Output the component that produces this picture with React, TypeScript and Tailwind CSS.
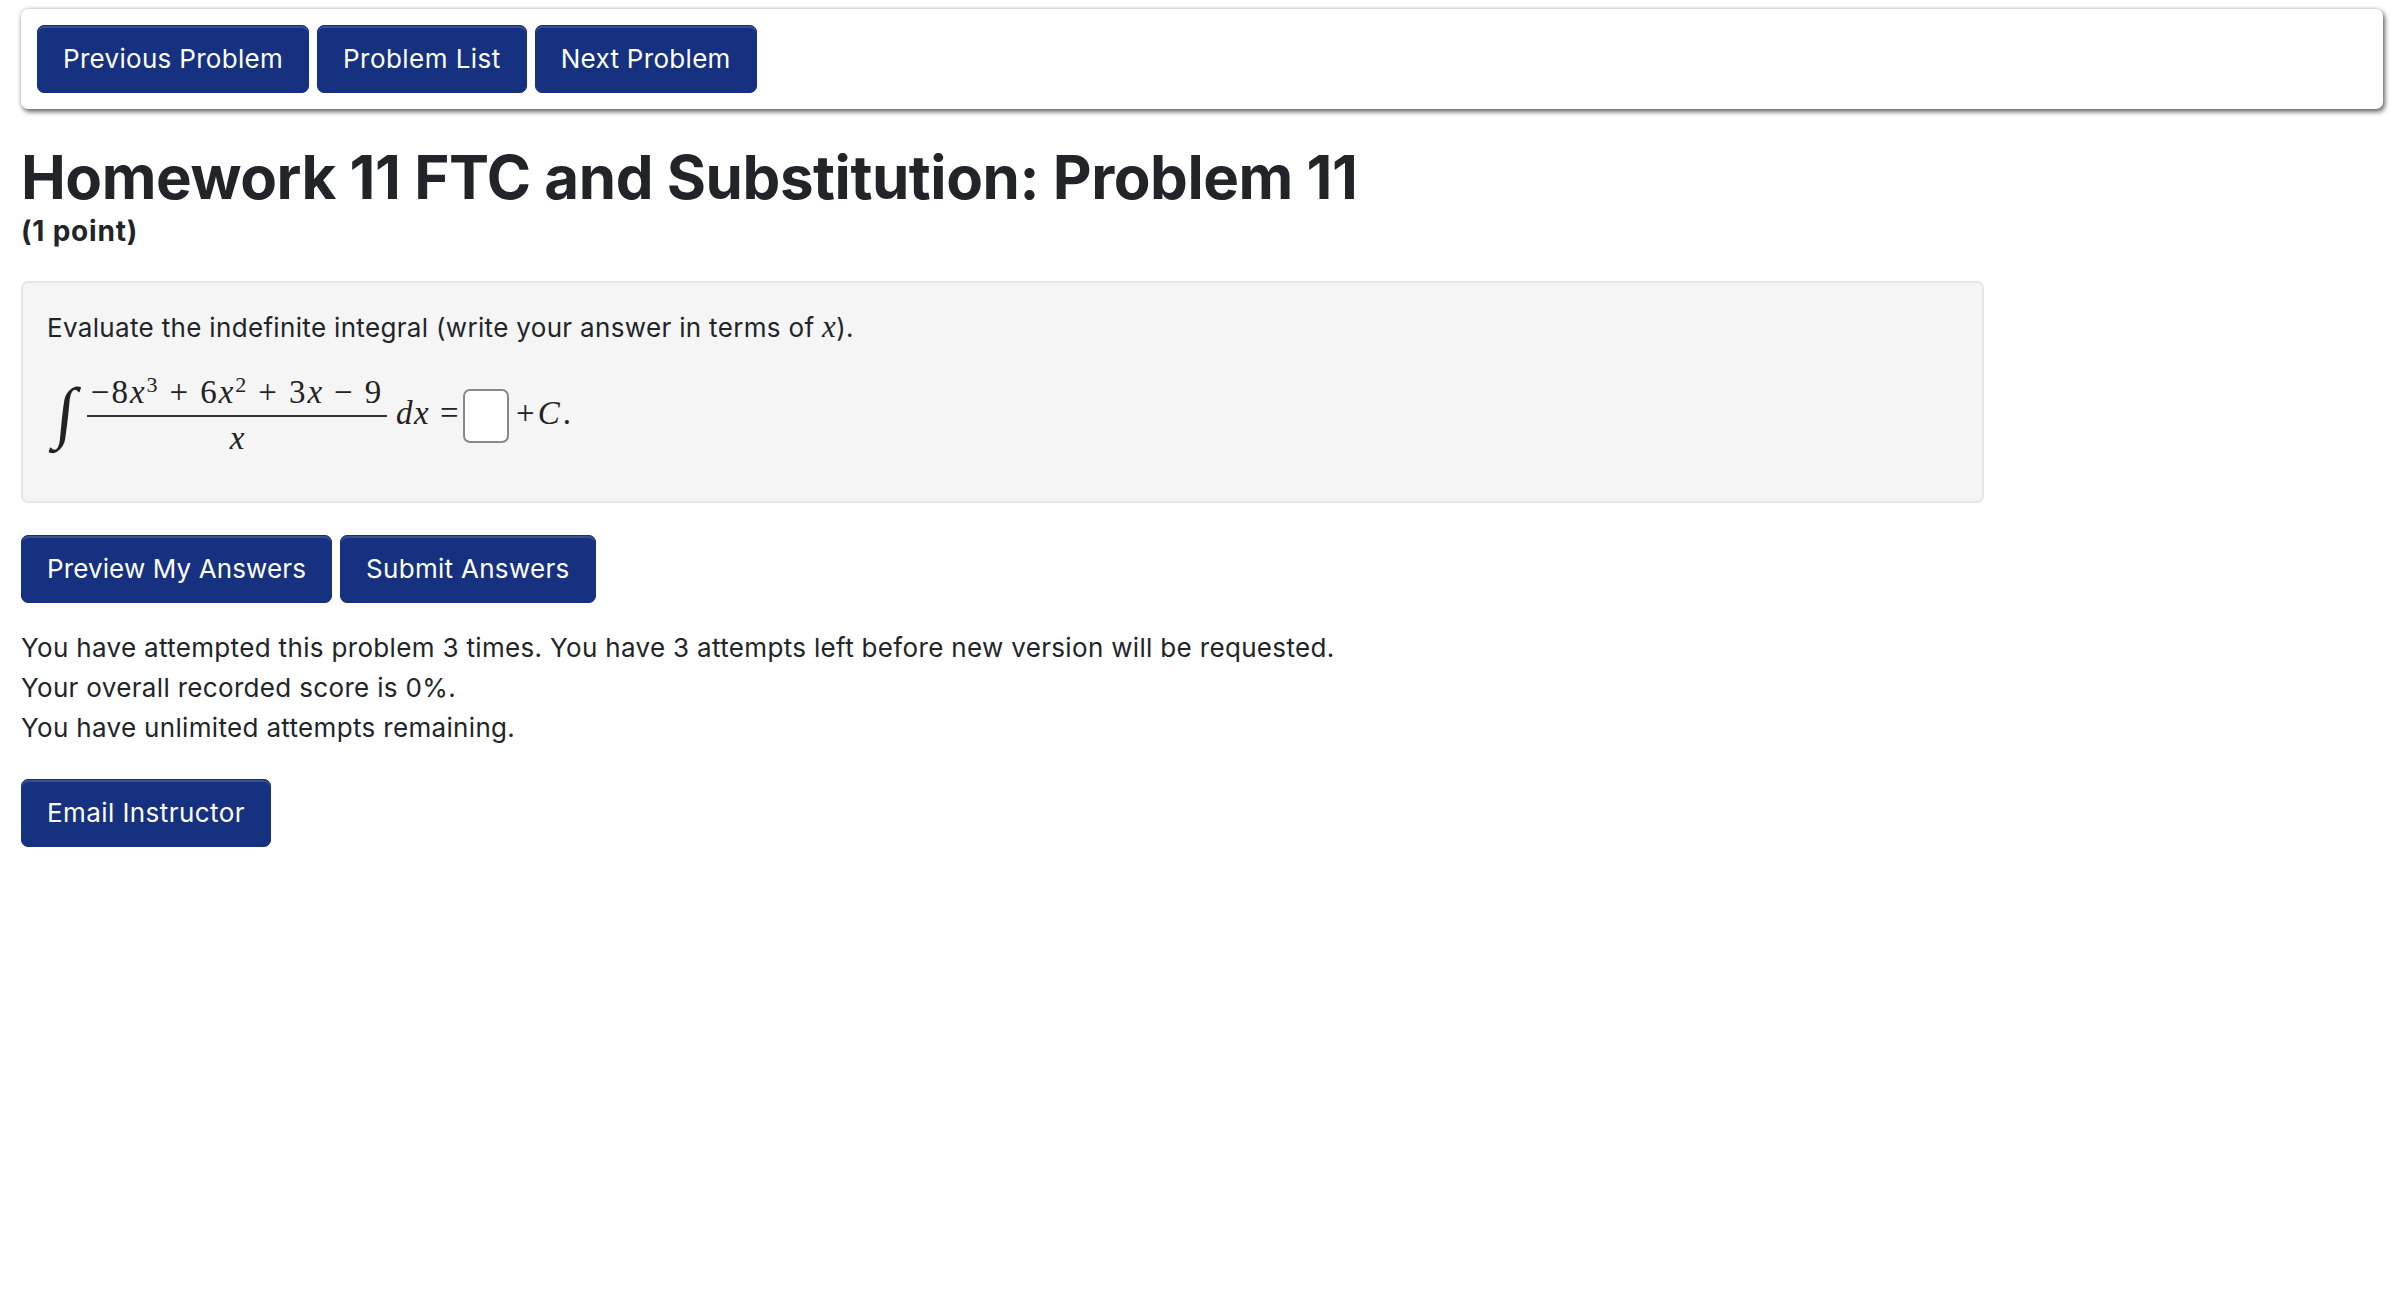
const btn =
  "h-[68px] rounded-[7px] border border-[#15307f] bg-[#163180] px-[25px] text-[26px] leading-none text-white shadow-[inset_0_2px_0_rgba(255,255,255,.15)]";
const mi = "italic font-['Liberation_Serif',serif]";
const op = "mx-[10px]";

function Button({ label, tracking }: { label: string; tracking: string }) {
  return <button className={`${btn} ${tracking}`}>{label}</button>;
}

export default function App() {
  return (
    <div className="min-h-[1299px] bg-white font-['Inter',sans-serif] text-[26px] leading-[40px] tracking-[.33px] text-[#212529]">
      <div className="pl-[21px] pr-[16px] pt-[9px]">
        <nav className="flex h-[100px] items-center gap-[8px] rounded-[7px] bg-white pl-[16px] shadow-[2px_3px_5px_rgba(0,0,0,.55),0_0_4px_rgba(0,0,0,.25)]">
          <Button label="Previous Problem" tracking="tracking-[.3px]" />
          <Button label="Problem List" tracking="tracking-[.45px]" />
          <Button label="Next Problem" tracking="tracking-[.3px]" />
        </nav>

        <h1 className="mt-[32px] text-[60px] font-bold leading-[72px] tracking-[-0.45px]">
          Homework 11 FTC and Substitution: Problem 11
        </h1>
        <div className="text-[28px] font-bold leading-[36px] tracking-[.8px]">(1 point)</div>

        <section className="mt-[32px] h-[222px] w-[1963px] rounded-[7px] border-2 border-[#e6e6e6] bg-[#f5f5f5] px-[24px] pt-[24px]">
          <p>
            Evaluate the indefinite integral (write your answer in terms of <span className={`${mi} text-[31px]`}>x</span>).
          </p>
          <div className="mt-[23px] flex items-center font-['Liberation_Serif',serif] text-[33px] leading-none tracking-normal text-[#222]">
            <span className="ml-[9px] inline-block w-[31px] -skew-x-6 pb-[8px] text-[68px] leading-none">∫</span>
            <div className="flex w-[300px] flex-col items-center">
              <div className="flex h-[44px] items-end justify-center pb-[6px] tracking-[2px] whitespace-nowrap">
                <span>
                  −8<span className={mi}>x</span>
                  <sup className="text-[22px]">3</sup>
                  <span className={op}>+</span>6<span className={mi}>x</span>
                  <sup className="text-[22px]">2</sup>
                  <span className={op}>+</span>3<span className={mi}>x</span>
                  <span className={op}>−</span>9
                </span>
              </div>
              <div className="h-[2px] w-full bg-[#333]" />
              <div className={`h-[44px] pt-[5px] ${mi}`}>x</div>
            </div>
            <span className="ml-[9px] whitespace-pre pb-[6px] tracking-[1.5px]">
              <span className={mi}>dx</span> =
            </span>
            <input className="ml-[3px] mr-[7px] h-[54px] w-[46px] rounded-[7px] border-2 border-[#888] bg-white" />
            <span className="pb-[6px] tracking-[3px]">
              +<span className={mi}>C</span>.
            </span>
          </div>
        </section>

        <div className="mt-[32px] flex gap-[8px]">
          <Button label="Preview My Answers" tracking="tracking-[.12px]" />
          <Button label="Submit Answers" tracking="tracking-[.3px]" />
        </div>

        <div className="mt-[25px]">
          <div>You have attempted this problem 3 times. You have 3 attempts left before new version will be requested.</div>
          <div>Your overall recorded score is 0%.</div>
          <div>You have unlimited attempts remaining.</div>
        </div>

        <div className="mt-[31px]">
          <Button label="Email Instructor" tracking="tracking-[.42px]" />
        </div>
      </div>
    </div>
  );
}
